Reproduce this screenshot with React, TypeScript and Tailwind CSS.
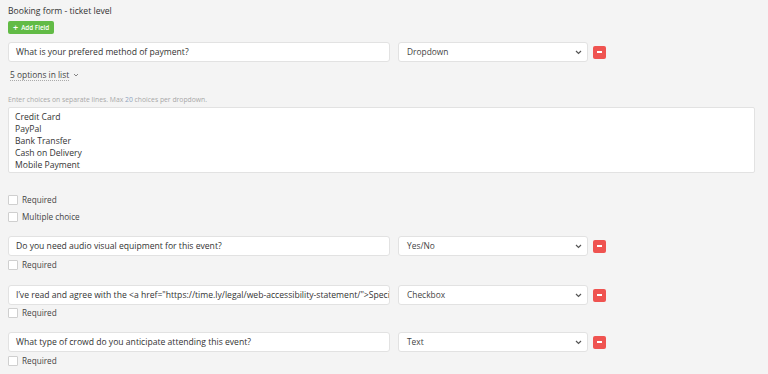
import React from "react";

const font = { fontFamily: '"Open Sans", "Noto Sans", sans-serif' };

function Chevron() {
  return (
    <svg width="7" height="5" viewBox="0 0 7 5" className="text-[#555]">
      <path d="M1 1l2.5 2.5L6 1" fill="none" stroke="currentColor" strokeWidth="1.2" />
    </svg>
  );
}

function FieldRow({ label, type }: { label: string; type: string }) {
  return (
    <div className="flex items-center">
      <div className="w-[382px] h-[20px] bg-white border border-[#e2e2e2] rounded-[3px] px-[7px] flex items-center text-[8.6px] text-[#333] whitespace-nowrap overflow-hidden">
        {label}
      </div>
      <div className="ml-[8px] w-[190px] h-[20px] bg-white border border-[#e2e2e2] rounded-[3px] pl-[8px] pr-[5px] flex items-center justify-between text-[8.4px] text-[#444]">
        <span>{type}</span>
        <Chevron />
      </div>
      <button className="ml-[5px] w-[13px] h-[13px] bg-[#ef5350] rounded-[2px] flex items-center justify-center">
        <span className="block w-[5px] h-[1.5px] bg-white" />
      </button>
    </div>
  );
}

function Check({ label }: { label: string }) {
  return (
    <label className="flex items-center gap-[4px] text-[8.2px] leading-[12px] text-[#444]">
      <span className="w-[10px] h-[10px] bg-white border border-[#cfcfcf] rounded-[1px]" />
      {label}
    </label>
  );
}

export default function App() {
  return (
    <div className="w-[768px] h-[374px] bg-[#f4f4f4] pl-[8px] pt-[5px] overflow-hidden" style={font}>
      {/* header */}
      <div className="text-[8.6px] text-[#333] leading-[12px]">Booking form - ticket level</div>
      <button className="mt-[4px] h-[13px] px-[5px] bg-[#62bb46] rounded-[2px] flex items-center gap-[3px] text-white text-[6.3px] font-semibold">
        <span className="text-[9px] leading-none">+</span> Add Field
      </button>

      {/* dropdown field */}
      <div className="mt-[8px]">
        <FieldRow label="What is your prefered method of payment?" type="Dropdown" />
      </div>
      <div className="mt-[7px] pl-[2px] flex items-center gap-[4px] text-[8.4px] text-[#444]">
        <span className="border-b border-dotted border-[#aaa] leading-[11px]">5 options in list</span>
        <svg width="6" height="4" viewBox="0 0 6 4"><path d="M1 1l2 2 2-2" fill="none" stroke="#777" strokeWidth="0.9" /></svg>
      </div>
      <div className="mt-[15px] text-[6.8px] text-[#a8a8a8] leading-[8px]">
        Enter choices on separate lines. Max <span className="text-[#8ea3c0]">20</span> choices per dropdown.
      </div>
      <div className="mt-[3px] w-[747px] h-[66px] bg-white border border-[#e2e2e2] rounded-[2px] px-[6px] pt-[3px] text-[8.6px] leading-[12px] text-[#333]">
        <div>Credit Card</div>
        <div>PayPal</div>
        <div>Bank Transfer</div>
        <div>Cash on Delivery</div>
        <div>Mobile Payment</div>
      </div>
      <div className="mt-[21px] flex flex-col gap-[5px]">
        <Check label="Required" />
        <Check label="Multiple choice" />
      </div>

      <div className="mt-[13px]">
        <FieldRow label="Do you need audio visual equipment for this event?" type="Yes/No" />
      </div>
      <div className="mt-[3px]">
        <Check label="Required" />
      </div>

      <div className="mt-[14px]">
        <FieldRow
          label={'I\u2019ve read and agree with the <a href="https://time.ly/legal/web-accessibility-statement/">Special terms'}
          type="Checkbox"
        />
      </div>
      <div className="mt-[2px]">
        <Check label="Required" />
      </div>

      <div className="mt-[13px]">
        <FieldRow label="What type of crowd do you anticipate attending this event?" type="Text" />
      </div>
      <div className="mt-[3px]">
        <Check label="Required" />
      </div>
    </div>
  );
}
